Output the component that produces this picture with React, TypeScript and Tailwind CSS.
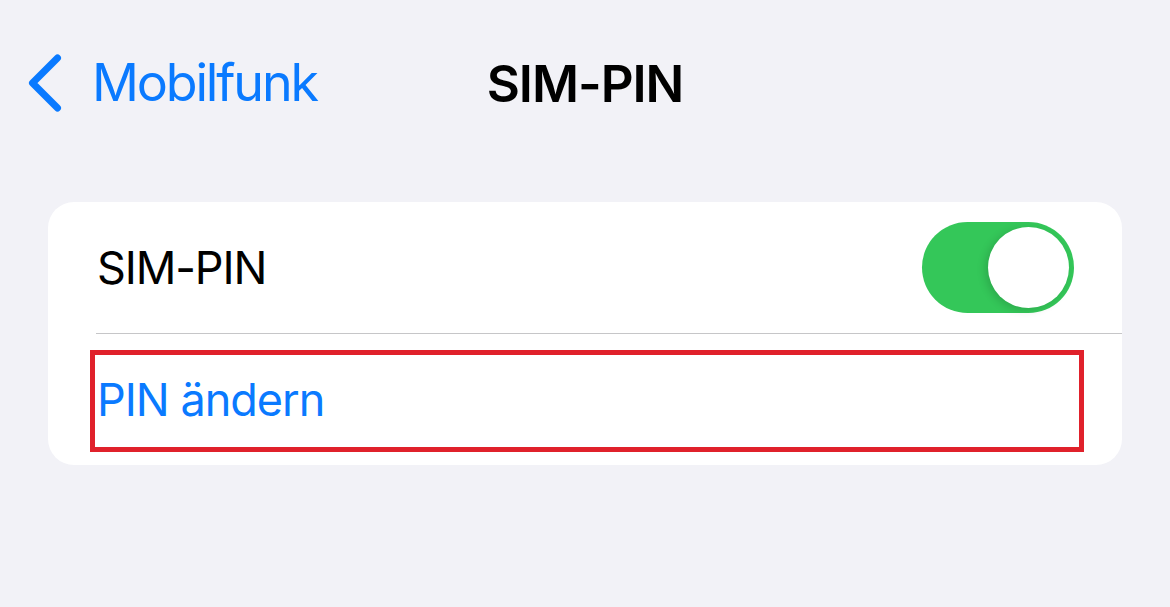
export default function App() {
  return (
    <div
      className="min-h-[607px] w-full bg-[#f2f2f7] overflow-hidden"
      style={{ fontFamily: "Inter, 'Noto Sans', sans-serif" }}
    >
      {/* nav bar */}
      <div className="grid h-[166px] grid-cols-[1fr_auto_1fr] items-center">
        <div className="flex items-center pl-[28px]">
          <svg width="34" height="58" viewBox="0 0 34 58" fill="none" className="mr-[30px]">
            <path
              d="M29.5 4 L4.5 29 L29.5 54"
              stroke="#0a7aff"
              strokeWidth="7"
              strokeLinecap="round"
              strokeLinejoin="round"
            />
          </svg>
          <span className="text-[52px] leading-none tracking-[-0.042em] text-[#0a7aff]">Mobilfunk</span>
        </div>
        <div className="text-[51px] font-semibold leading-none tracking-[-0.02em] text-black">SIM-PIN</div>
        <div />
      </div>

      {/* settings group */}
      <div className="mx-[48px] mt-[36px] overflow-hidden rounded-[26px] bg-white">
        <div className="flex h-[131px] items-center justify-between pl-[49px] pr-[48px]">
          <span className="text-[45px] leading-none tracking-[-0.025em] text-black">SIM-PIN</span>
          <div className="flex h-[91px] w-[152px] items-center justify-end rounded-full bg-[#34c759] pr-[5px]">
            <div className="h-[81px] w-[81px] rounded-full bg-white shadow-[-3px_2px_8px_rgba(0,0,0,0.15)]" />
          </div>
        </div>
        <div className="ml-[48px] h-px bg-[#c6c6c8]" />
        <div className="relative flex h-[131px] items-center pl-[49px]">
          <span className="text-[45px] leading-none tracking-[-0.022em] text-[#0a7aff]">PIN ändern</span>
          <div className="absolute left-[42px] top-[16px] h-[102px] w-[994px] border-[5px] border-[#e0212b]" />
        </div>
      </div>
    </div>
  );
}
